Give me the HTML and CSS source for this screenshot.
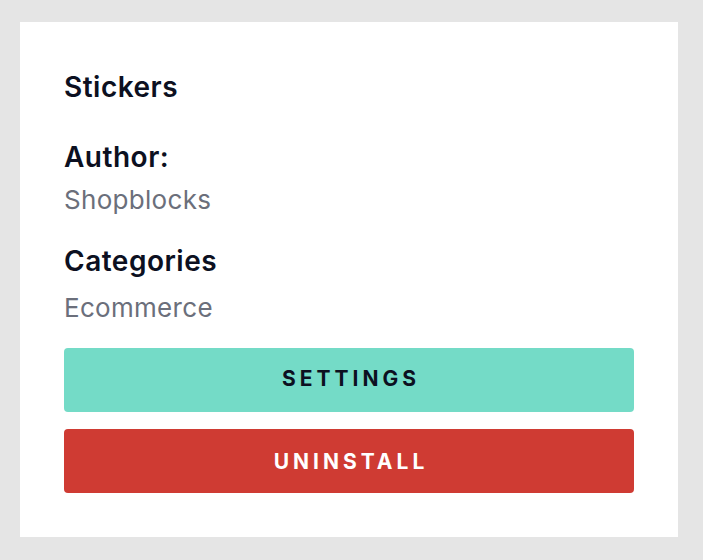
FILE: index.html
```html
<!DOCTYPE html>
<html>
<head>
<meta charset="utf-8">
<link rel="stylesheet" href="styles.css">
</head>
<body>
<div class="page">
  <div class="card">
    <h2 class="title">Stickers</h2>
    <div class="field field-author">
      <h3 class="label">Author:</h3>
      <p class="value value-author">Shopblocks</p>
    </div>
    <div class="field field-categories">
      <h3 class="label">Categories</h3>
      <p class="value value-categories">Ecommerce</p>
    </div>
    <div class="actions">
      <button class="btn btn-settings">SETTINGS</button>
      <button class="btn btn-uninstall">UNINSTALL</button>
    </div>
  </div>
</div>
</body>
</html>
```
FILE: styles.css
```css
html, body {
  margin: 0;
  padding: 0;
  background: #e5e5e5;
}
body {
  font-family: Inter, "Noto Sans", sans-serif;
  color: #0c1021;
}
.page {
  padding: 22px 25px 23px 20px;
}
.card {
  background: #ffffff;
  padding: 48px 44px 0 44px;
  display: flex;
  flex-direction: column;
  height: 515px;
  box-sizing: border-box;
}
.title,
.label {
  margin: 0;
  font-size: 28px;
  font-weight: 600;
  line-height: 34px;
  letter-spacing: 0.5px;
}
.field-author {
  margin-top: 36px;
}
.field-categories {
  margin-top: 27px;
}
.value {
  margin: 0;
  font-size: 26px;
  font-weight: 400;
  line-height: 34px;
  letter-spacing: 0.3px;
  color: #6b6f7b;
}
.value-author {
  margin-top: 9px;
}
.value-categories {
  margin-top: 13px;
}
.actions {
  margin-top: 23px;
  display: flex;
  flex-direction: column;
  gap: 17px;
}
.btn {
  height: 64px;
  padding: 0;
  border: none;
  border-radius: 4px;
  font-family: Inter, "Noto Sans", sans-serif;
  font-size: 21px;
  font-weight: 700;
  letter-spacing: 4px;
  text-indent: 4px;
  cursor: pointer;
}
.btn-settings {
  background: #74dbc7;
  color: #0c1021;
  padding-bottom: 3px;
}
.btn-uninstall {
  background: #cf3b33;
  color: #ffffff;
}
```
